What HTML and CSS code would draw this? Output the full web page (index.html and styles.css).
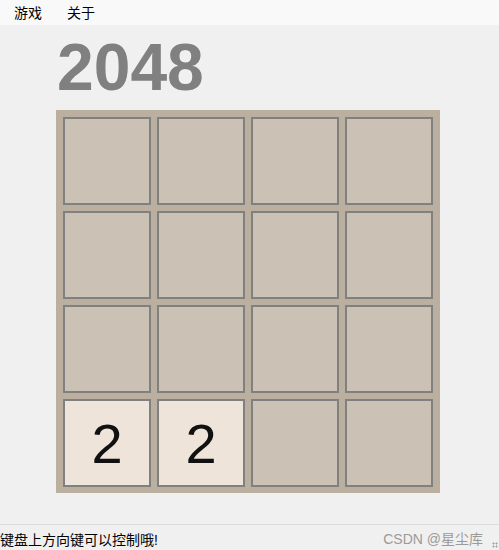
FILE: index.html
```html
<!DOCTYPE html>
<html lang="zh-CN">
<head>
    <meta charset="UTF-8">
    <title>2048</title>
    <link rel="stylesheet" href="styles.css">
</head>
<body>

    <!-- Menu Bar -->
    <div class="menubar">
        <span class="menu-item">游戏</span>
        <span class="menu-item">关于</span>
    </div>

    <!-- Game Area -->
    <div class="main">
        <h1 class="title">2048</h1>

        <div class="board">
            <div class="tile"></div>
            <div class="tile"></div>
            <div class="tile"></div>
            <div class="tile"></div>

            <div class="tile"></div>
            <div class="tile"></div>
            <div class="tile"></div>
            <div class="tile"></div>

            <div class="tile"></div>
            <div class="tile"></div>
            <div class="tile"></div>
            <div class="tile"></div>

            <div class="tile tile-2">2</div>
            <div class="tile tile-2">2</div>
            <div class="tile"></div>
            <div class="tile"></div>
        </div>
    </div>

    <!-- Status Bar -->
    <div class="statusbar">
        <span class="status-text">键盘上方向键可以控制哦!</span>
        <span class="watermark">CSDN @星尘库</span>
        <span class="grip"></span>
    </div>

</body>
</html>
```

FILE: styles.css
```css
* {
    margin: 0;
    padding: 0;
    box-sizing: border-box;
}

html, body {
    width: 499px;
    height: 550px;
    overflow: hidden;
}

body {
    font-family: "Liberation Sans", "Noto Sans CJK SC", sans-serif;
    background-color: #f0f0f0;
    color: #000;
    display: flex;
    flex-direction: column;
}

/* Menu Bar */
.menubar {
    height: 25px;
    background-color: #f9f9f9;
    display: flex;
    align-items: center;
    padding-left: 14px;
    gap: 25px;
    font-size: 14px;
}

.menu-item {
    line-height: 20px;
}

/* Game Area */
.main {
    flex: 1;
    padding-left: 56px;
}

.title {
    font-size: 66px;
    font-weight: bold;
    color: #808080;
    line-height: 72px;
    height: 85px;
    padding-left: 1px;
    padding-top: 6px;
}

.board {
    width: 384px;
    height: 383px;
    background-color: #bbb09f;
    padding: 7px;
    display: grid;
    grid-template-columns: repeat(4, 88px);
    grid-template-rows: repeat(4, 88px);
    gap: 6px;
}

.tile {
    background-color: #cbc1b5;
    border: 2px solid #808080;
    display: flex;
    align-items: center;
    justify-content: center;
    font-size: 56px;
    font-weight: normal;
    color: #111;
}

.tile-2 {
    background-color: #eee4da;
}

/* Status Bar */
.statusbar {
    height: 26px;
    border-top: 1px solid #dcdcdc;
    display: flex;
    align-items: center;
    font-size: 14px;
    position: relative;
}

.status-text {
    flex: 1;
    padding-top: 2px;
}

.watermark {
    color: #9a9a9a;
    font-size: 14px;
    margin-right: 16px;
    padding-top: 1px;
}

.grip {
    position: absolute;
    right: 1px;
    bottom: 2px;
    width: 6px;
    height: 6px;
    background-image: radial-gradient(circle, #a0a0a0 45%, transparent 50%);
    background-size: 3px 3px;
}
```
